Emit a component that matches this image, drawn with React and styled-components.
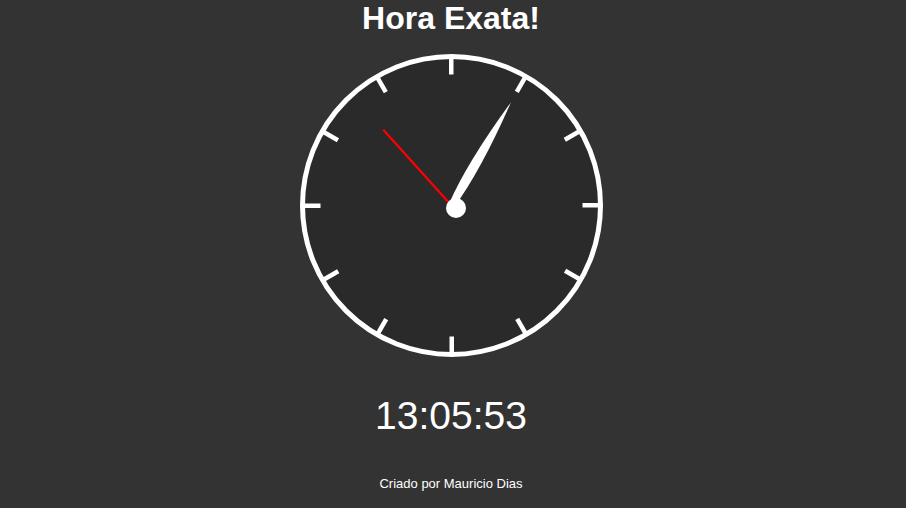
import React from "react";
import styled, { createGlobalStyle } from "styled-components";

const TIME = { h: 13, m: 5, s: 53 };

const GlobalStyle = createGlobalStyle`
  html, body {
    margin: 0;
    padding: 0;
    background: #333333;
  }
  body {
    font-family: "Liberation Sans", Arial, sans-serif;
    color: #fff;
  }
`;

const Page = styled.main`
  display: flex;
  flex-direction: column;
  align-items: center;
  min-height: 508px;
  padding-right: 4px;
`;

const Title = styled.h1`
  margin: 0;
  font-size: 32px;
  font-weight: bold;
  line-height: 37px;
`;

const Face = styled.div`
  position: relative;
  margin-top: 17px;
  width: 303px;
  height: 303px;
  border-radius: 50%;
  background: #2a2a2a;
`;

const Dot = styled.div`
  position: absolute;
  left: 146px;
  top: 144px;
  width: 20px;
  height: 20px;
  border-radius: 50%;
  background: #fff;
`;

const Digital = styled.div`
  margin-top: 36px;
  font-size: 39px;
  line-height: 46px;
`;

const Footer = styled.footer`
  margin-top: 37px;
  font-size: 13px;
  line-height: 15px;
`;

const ClockDrawing = ({ h, m, s }) => {
  const c = 151.5;
  const ticks = Array.from({ length: 12 }, (_, i) => i * 30);
  const secAngle = s * 6;
  const hourAngle = (h % 12) * 30 + m * 0.5 + s / 120 - 3;
  return (
    <svg width="303" height="303" viewBox="0 0 303 303">
      <circle cx={c} cy={c} r={149} fill="none" stroke="#fff" strokeWidth="5" />
      {ticks.map((a) => (
        <rect
          key={a}
          x={c - 2.5}
          y={3.5}
          width="4.5"
          height="17"
          fill="#fff"
          transform={`rotate(${a} ${c} ${c})`}
        />
      ))}
      <g transform={`translate(${c} ${c}) rotate(${hourAngle})`}>
        <path d="M -3 0 Q -8 -45 0 -119 Q 8 -45 3 0 Z" fill="#fff" />
      </g>
      <line
        x1={c}
        y1={c}
        x2={c}
        y2={c - 102}
        stroke="#ff0000"
        strokeWidth="2.2"
        transform={`rotate(${secAngle} ${c} ${c})`}
      />
    </svg>
  );
};

const pad = (n) => String(n).padStart(2, "0");

export default function App() {
  return (
    <>
      <GlobalStyle />
      <Page>
        <Title>Hora Exata!</Title>
        <Face>
          <ClockDrawing {...TIME} />
          <Dot />
        </Face>
        <Digital>
          {pad(TIME.h)}:{pad(TIME.m)}:{pad(TIME.s)}
        </Digital>
        <Footer>Criado por Mauricio Dias</Footer>
      </Page>
    </>
  );
}
